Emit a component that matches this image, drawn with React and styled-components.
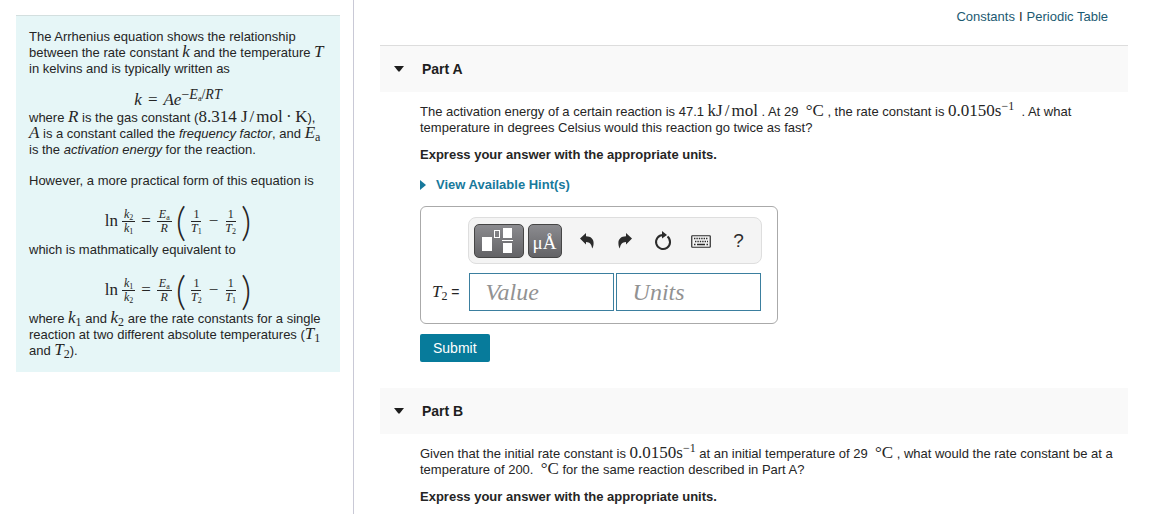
import React, { useState } from 'react'
import styled, { createGlobalStyle } from 'styled-components'

const GlobalStyle = createGlobalStyle`
    * {
        box-sizing: border-box;
    }
    body {
        margin: 0;
        background-color: white;
        color: #252525;
        font-family: "Liberation Sans", Arial, sans-serif;
        font-size: 13px;
        line-height: 16px;
    }
`

const Page = styled.div`
    display: flex;
    align-items: stretch;
    min-height: 100vh;
`
const Sidebar = styled.aside`
    flex: 0 0 354px;
    padding: 15px 13px 0 16px;
    border-right: 1px solid #c9c9d6;
`
const Intro = styled.section`
    padding: 13px;
    border-top: 1px solid #d3dfdf;
    background-color: #e6f6f7;
`
const Text = styled.p`
    margin: 0 0 ${props => props.$gap || '0'};
`
const Math = styled.span`
    font-family: "Liberation Serif", "Times New Roman", serif;
    font-size: 17px;
    line-height: 12px;
    white-space: nowrap;
`
const Slash = styled.span`
    padding: 0 2px;
`
const Sub = styled.sub`
    font-size: 12px;
    font-style: normal;
    line-height: 0;
    vertical-align: -3px;
`
const Sup = styled.sup`
    font-size: 12px;
    line-height: 0;
    vertical-align: 6px;
`
const Exponent = styled(Sup)`
    font-size: 14px;
`
const TinySub = styled.sub`
    font-size: 8px;
    font-style: normal;
    line-height: 0;
    vertical-align: -2px;
`
const Equation = styled.div`
    display: flex;
    align-items: center;
    justify-content: center;
    gap: ${props => (props.$tall ? '4px' : '6px')};
    height: ${props => (props.$tall ? '53px' : '33px')};
    padding-top: ${props => (props.$tall ? '11px' : '12px')};
    font-family: "Liberation Serif", "Times New Roman", serif;
    font-size: 17px;
`
const Operator = styled.span`
    padding: 0 2px;
`
const Fraction = styled.span`
    display: flex;
    flex-direction: column;
    align-items: center;
    font-size: 12px;
    line-height: 13px;
`
const Over = styled.span`
    padding: 0 2px;
    border-bottom: 1px solid #252525;
`
const Under = styled.span`
    padding: 0 1px;
`
const Paren = styled.span`
    font-family: Lato, sans-serif;
    font-size: 40px;
    font-weight: 300;
    line-height: 36px;
`

const Main = styled.main`
    flex: 1;
    min-width: 0;
    padding: 0 39px 0 26px;
`
const TopLinks = styled.nav`
    display: flex;
    justify-content: flex-end;
    gap: 4px;
    padding: 9px 20px 20px;
`
const TopLink = styled.a`
    color: #1c5a72;
    text-decoration: none;
`
const PartTitle = styled.h2`
    margin: 0;
    border-top: ${props => (props.$line ? '1px solid #dddddd' : 'none')};
    background-color: #f9f9f9;
    font-size: 14px;
`
const Toggle = styled.button`
    display: flex;
    align-items: center;
    gap: 18px;
    width: 100%;
    height: 46px;
    padding: 0 14px;
    border: none;
    background: none;
    color: #1e1e1e;
    font: inherit;
    cursor: pointer;
`
const PartBody = styled.div`
    padding: 12px 0 0 40px;
`
const Strong = styled.p`
    margin: 0;
    font-weight: bold;
`
const HintButton = styled.button`
    display: flex;
    align-items: center;
    gap: 10px;
    margin-top: 14px;
    padding: 0;
    border: none;
    background: none;
    color: #17799c;
    font: inherit;
    font-weight: bold;
    cursor: pointer;
`
const Form = styled.form`
    padding-bottom: 26px;
`
const AnswerBox = styled.div`
    display: inline-grid;
    grid-template-columns: auto auto;
    align-items: center;
    column-gap: 8px;
    row-gap: 9px;
    margin-top: 13px;
    padding: 10px 15px 12px 11px;
    border: 1px solid #aaaaaa;
    border-radius: 6px;
`
const Toolbar = styled.div`
    grid-column: 2;
    display: flex;
    align-items: center;
    gap: 6px;
    height: 47px;
    padding: 0 3px 0 5px;
    border: 1px solid #dedede;
    border-radius: 8px;
    background-color: #f4f4f4;
`
const ButtonGroup = styled.div`
    display: flex;
    gap: ${props => props.$gap || '0'};
`
const DarkButton = styled.button`
    display: flex;
    align-items: center;
    justify-content: center;
    width: ${props => props.$width};
    height: 34px;
    padding: 0;
    border: 1px solid #454545;
    border-radius: 5px;
    background: linear-gradient(#8b8b8f, #636366);
    color: white;
    font-family: "Liberation Serif", serif;
    font-size: 19px;
    cursor: pointer;
`
const UnitSymbols = styled.span`
    padding-top: 4px;
`
const IconButton = styled.button`
    display: flex;
    align-items: center;
    justify-content: center;
    width: 38px;
    height: 34px;
    padding: 0;
    border: none;
    background: none;
    color: #2b2b2b;
    font-family: inherit;
    font-size: 19px;
    cursor: pointer;
`
const AnswerLabel = styled.label`
    font-size: 14px;
`
const Fields = styled.div`
    display: flex;
    gap: 2px;
    padding: 0 1px;
`
const Field = styled.input`
    width: 145px;
    height: 38px;
    padding: 0 16px;
    border: 1px solid #3b7f9f;
    border-radius: 0;
    background-color: white;
    color: #252525;
    font-family: "Liberation Serif", serif;
    font-size: 24px;
    &::placeholder{
        color: #929292;
        font-style: italic;
        opacity: 1;
    }
`
const SubmitButton = styled.button`
    display: block;
    height: 28px;
    margin-top: 10px;
    padding: 0 13px;
    border: none;
    border-radius: 2px;
    background-color: #077b9b;
    color: white;
    font-family: inherit;
    font-size: 14px;
    cursor: pointer;
`

function Frac({top, bottom}) {
    return (
        <Fraction>
            <Over>{top}</Over>
            <Under>{bottom}</Under>
        </Fraction>
    )
}

function Term({name, sub}) {
    return <><i>{name}</i><Sub>{sub}</Sub></>
}

function SmallTerm({name, sub}) {
    return <><i>{name}</i><TinySub>{sub}</TinySub></>
}

function LogEquation({first, second}) {
    return (
        <Equation $tall>
            <span>ln</span>
            <Frac top={<SmallTerm name="k" sub={second}/>} bottom={<SmallTerm name="k" sub={first}/>}/>
            <Operator>=</Operator>
            <Frac top={<SmallTerm name="E" sub="a"/>} bottom={<i>R</i>}/>
            <Paren>(</Paren>
            <Frac top="1" bottom={<SmallTerm name="T" sub={first}/>}/>
            <Operator>−</Operator>
            <Frac top="1" bottom={<SmallTerm name="T" sub={second}/>}/>
            <Paren>)</Paren>
        </Equation>
    )
}

function Part({title, line, children}) {

    const [open, setOpen] = useState(true);

    return (
        <section>
            <PartTitle $line={line}>
                <Toggle aria-expanded={open} onClick={()=>{ setOpen(!open)}}>
                    <svg width="10" height="6" viewBox="0 0 10 6" aria-hidden="true">
                        <path d="M0 0H10L5.8 5.3Q5 6 4.2 5.3Z" fill="#1e1e1e"/>
                    </svg>
                    {title}
                </Toggle>
            </PartTitle>
            {open && <PartBody>{children}</PartBody>}
        </section>
    )
}

function TemplateIcon() {
    return (
        <svg width="34" height="28" viewBox="0 0 34 28" aria-hidden="true">
            <path d="M0 10H10V24H0ZM21 1H30V11H21ZM21 16H30V26H21ZM20 13H31V14H20Z" fill="white"/>
            <rect x="12.5" y="3.5" width="5" height="7" fill="none" stroke="white"/>
        </svg>
    )
}

function UndoIcon({flip}) {
    return (
        <svg width="14" height="16" viewBox="0 0 14 16" aria-hidden="true">
            <path
                d="M0 5.5L6 0V3.2C11 3.200 13.600 6 13.600 10C13.600 12.400 13 14.400 12.200 15.600C11.600 11.500 10 9.200 6 9V11.600Z"
                fill="currentColor"
                transform={flip ? 'translate(14 0) scale(-1 1)' : undefined}
            />
        </svg>
    )
}

function ResetIcon() {
    return (
        <svg width="18" height="20" viewBox="0 0 18 20" aria-hidden="true">
            <path d="M13.500 5.600A7 7 0 1 1 9 4" fill="none" stroke="currentColor" strokeWidth="2"/>
            <path d="M8 0L13 4L8 7.600Z" fill="currentColor"/>
        </svg>
    )
}

function KeyboardIcon() {
    return (
        <svg width="20" height="15" viewBox="0 -2 20 15" aria-hidden="true">
            <rect x="0.750" y="0.750" width="18.500" height="11.500" rx="0.500" fill="none" stroke="currentColor" strokeWidth="1.200"/>
            <path d="M3 3.500H17M4 6.500H17" stroke="currentColor" strokeWidth="1.500" strokeDasharray="1.400 1"/>
            <path d="M3 9.500H4.500M6 9.500H14M15.500 9.500H17" stroke="currentColor" strokeWidth="1.500"/>
        </svg>
    )
}

function AnswerForm() {
    return (
        <Form onSubmit={(e)=>{ e.preventDefault()}}>
            <AnswerBox>
                <Toolbar role="toolbar">
                    <ButtonGroup $gap="4px">
                        <DarkButton type="button" $width="50px" aria-label="Templates"><TemplateIcon/></DarkButton>
                        <DarkButton type="button" $width="34px"><UnitSymbols>μÅ</UnitSymbols></DarkButton>
                    </ButtonGroup>
                    <ButtonGroup>
                        <IconButton type="button" aria-label="Undo"><UndoIcon/></IconButton>
                        <IconButton type="button" aria-label="Redo"><UndoIcon flip/></IconButton>
                        <IconButton type="button" aria-label="Reset"><ResetIcon/></IconButton>
                        <IconButton type="button" aria-label="Keyboard shortcuts"><KeyboardIcon/></IconButton>
                        <IconButton type="button">?</IconButton>
                    </ButtonGroup>
                </Toolbar>
                <AnswerLabel htmlFor="value"><Math><Term name="T" sub="2"/></Math> =</AnswerLabel>
                <Fields>
                    <Field id="value" placeholder="Value" aria-label="Value"/>
                    <Field id="units" placeholder="Units" aria-label="Units"/>
                </Fields>
            </AnswerBox>
            <SubmitButton>Submit</SubmitButton>
        </Form>
    )
}

function App() {

    const rate = <Math>0.0150s<Sup>−1</Sup></Math>
    const celsius = <Math>°C</Math>

    return (
        <>
            <GlobalStyle/>
            <Page>
                <Sidebar>
                    <Intro>
                        <Text>
                            The Arrhenius equation shows the relationship between the rate
                            constant <Math><i>k</i></Math> and the temperature <Math><i>T</i></Math> in
                            kelvins and is typically written as
                        </Text>
                        <Equation>
                            <i>k</i>
                            <span>=</span>
                            <span><i>Ae</i><Exponent>−<i>E</i><TinySub>a</TinySub>/<i>RT</i></Exponent></span>
                        </Equation>
                        <Text $gap="15px">
                            where <Math><i>R</i></Math> is the gas constant (<Math>8.314 J<Slash>/</Slash>mol&thinsp;·&thinsp;K</Math>), <Math><i>A</i></Math> is
                            a constant called the <em>frequency factor</em>, and <Math><Term name="E" sub="a"/></Math> is
                            the <em>activation energy</em> for the reaction.
                        </Text>
                        <Text>However, a more practical form of this equation is</Text>
                        <LogEquation first="1" second="2"/>
                        <Text>which is mathmatically equivalent to</Text>
                        <LogEquation first="2" second="1"/>
                        <Text>
                            where <Math><Term name="k" sub="1"/></Math> and <Math><Term name="k" sub="2"/></Math> are
                            the rate constants for a single reaction at two different absolute
                            temperatures (<Math><Term name="T" sub="1"/></Math> and <Math><Term name="T" sub="2"/></Math>).
                        </Text>
                    </Intro>
                </Sidebar>
                <Main>
                    <TopLinks>
                        <TopLink href="#constants">Constants</TopLink>
                        <span>I</span>
                        <TopLink href="#periodic-table">Periodic Table</TopLink>
                    </TopLinks>
                    <Part title="Part A" line>
                        <Text $gap="11px">
                            The activation energy of a certain reaction is 47.1 <Math>kJ<Slash>/</Slash>mol</Math> .
                            At 29 &nbsp;{celsius} , the rate constant is {rate} &nbsp;. At what temperature in
                            degrees Celsius would this reaction go twice as fast?
                        </Text>
                        <Strong>Express your answer with the appropriate units.</Strong>
                        <HintButton>
                            <svg width="6" height="10" viewBox="0 0 6 10" aria-hidden="true">
                                <path d="M0 0L6 5L0 10Z" fill="#17799c"/>
                            </svg>
                            View Available Hint(s)
                        </HintButton>
                        <AnswerForm/>
                    </Part>
                    <Part title="Part B">
                        <Text $gap="11px">
                            Given that the initial rate constant is {rate} at an initial temperature of
                            29 &nbsp;{celsius} , what would the rate constant be at a temperature of
                            200. &nbsp;{celsius} for the same reaction described in Part A?
                        </Text>
                        <Strong>Express your answer with the appropriate units.</Strong>
                    </Part>
                </Main>
            </Page>
        </>
    )
}

export default App
